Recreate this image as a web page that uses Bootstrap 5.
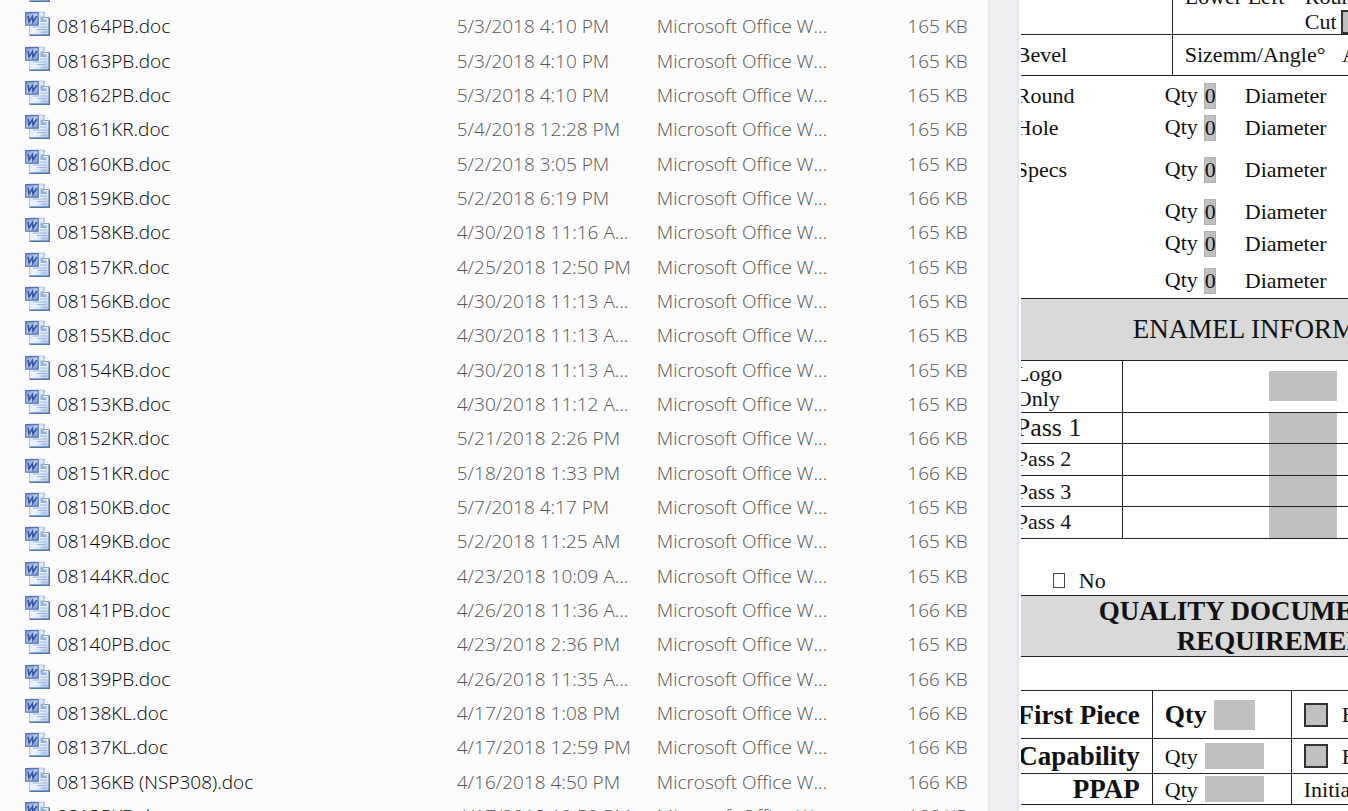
<!DOCTYPE html>
<html lang="en">
<head>
<meta charset="utf-8">
<meta name="viewport" content="width=device-width, initial-scale=1">
<title>Files and order form</title>
<link href="https://cdn.jsdelivr.net/npm/bootstrap@5.3.0/dist/css/bootstrap.min.css" rel="stylesheet">
<style>
  .workspace { display: grid; grid-template-columns: minmax(0, 3fr) 31px minmax(0, 1fr); }

  /* File list */
  .file-pane { background: #fcfcfc; }
  .file-list { table-layout: fixed; margin-top: -25px; font: 300 19px/24px "Open Sans", "Noto Sans", sans-serif; color: #555; }
  .file-list tr { height: 34px; }
  .file-list tr:nth-child(3n) { height: 35px; }
  .file-list td { padding: 0; white-space: nowrap; overflow: hidden; vertical-align: middle; }
  .file-list .file-name { padding-left: 25px; color: #000; }
  .file-list .file-name span { gap: 7px; }
  .file-list .file-size { padding-right: 20px; text-align: right; }
  .col-mid { width: 200px; }
  .col-size { width: 131px; }
  .doc-icon { width: 25px; height: 25px; margin-bottom: 5px; }
  .splitter { background: #eee; border-left: 2px solid #e8e8e8; border-right: 2px solid #dae5f5; }

  /* Order form */
  .form-pane { background: #fff; border-left: 2px solid #fff; font: 22px/25px "Liberation Serif", serif; color: #111; }
  .form-sheet { width: 640px; }
  .form-sheet table { width: 100%; table-layout: fixed; border-collapse: separate; border-spacing: 0; }
  .form-sheet th, .form-sheet td { padding: 0 12px; vertical-align: middle; font-weight: 400; white-space: nowrap; }
  .ruled th, .ruled td { border-bottom: 1px solid #222; }
  .ruled th, .ruled .divided { border-right: 1px solid #222; }
  .form-sheet .cut-off { padding-left: 0; text-indent: -5px; }
  .big { font-size: 27px; line-height: 30px; }
  .form-sheet .raised { padding-bottom: 2px; }
  .band { background: #d9d9d9; border-bottom: 1px solid #222; font-size: 27px; line-height: 30px; margin: 0; font-weight: 400; }
  .enamel { height: 62px; padding: 0 0 2px 112px; }
  .quality { padding-left: 78px; }
  .quality span { padding-left: 78px; }
  .corner-table { margin-top: -16px; }
  .corner-grid { display: grid; grid-template-columns: 120px 1fr; }
  .pass-table .pass-1 { font-size: 26px; line-height: 28px; }
  .pass-table td, .pass-table th { height: 31px; }
  .pass-table tr:nth-child(2n+3) td { height: 32px; }
  .fill { appearance: none; border: 0; border-radius: 0; background: #c0c0c0; padding: 0; margin: 0; display: block; color: #111; outline: 0; }
  .fill-zero { width: 12px; height: 26px; border: 1px solid #b0b0b0; text-align: center; font: inherit; }
  .fill-col { width: 68px; height: 30px; margin-left: 134px; }
  .pass-table tr:nth-child(2n+3) .fill-col { height: 31px; }
  .fill-wide { width: 59px; height: 26px; }
  .fill-narrow { width: 41px; height: 30px; }
  .tick { appearance: none; background: #c0c0c0; border: 2px solid #333; margin: 0; width: 24px; height: 24px; flex: none; }
  .tick-plain { appearance: none; background: #fff; border: 1px solid #444; margin: 0; width: 12px; height: 15px; }
  .hole-table { border-bottom: 1px solid #222; }
  .hole-table label { gap: 6px; line-height: 24px; }
  .none-row { padding: 28px 0 0 32px; border-bottom: 1px solid #222; height: 57px; }
  .none-row label { height: 26px; gap: 14px; }
  .quality-table { border-top: 1px solid #222; margin-top: 33px; }
  .qty { gap: 7px; }
  .qty-big { gap: 7px; font-size: 26px; }
  .check-label { gap: 14px; }
</style>
</head>
<body>
<svg class="position-absolute" width="0" height="0" aria-hidden="true">
  <defs>
    <linearGradient id="sheet" x1="0" y1="0" x2="1" y2="1"><stop offset="0" stop-color="#cfe0f6"/><stop offset=".55" stop-color="#edf4fd"/><stop offset="1" stop-color="#a3c3ec"/></linearGradient>
    <linearGradient id="plate" x1="0" y1="0" x2="1" y2="1"><stop offset="0" stop-color="#6f90d6"/><stop offset=".5" stop-color="#c3d4f1"/><stop offset="1" stop-color="#6d8ed2"/></linearGradient>
  </defs>
  <symbol id="word" viewBox="0 0 25 25">
    <path d="M4.500 1H19l5.300 5.500V24H4.500z" fill="url(#sheet)" stroke="#a8bddd" stroke-width=".8"/>
    <path d="M24.300 7v17.200H4.500" fill="none" stroke="#4f76ae" stroke-width="1.400"/>
    <path d="M19 1v5.500h5.300" fill="#fff" stroke="#7f96ba" stroke-width=".9"/>
    <path d="M15.500 5.500h3v3h3v2.500h-6z" fill="#8fb0e0"/>
    <path d="M15 13h6.500M8 16h13.500M12 18.500h9.500M16 21.200h5.500" stroke="#93afd8" stroke-width=".9"/>
    <path d="M.7 1.700h12.500v12.500H.7z" fill="url(#plate)" stroke="#5573b4" stroke-width="1.200"/>
    <path d="M3.200 5l.8 6L7.500 5.500 8 11l3.800-6" fill="none" stroke="#3353a0" stroke-width="1.600"/>
  </symbol>
</svg>

<div class="workspace vh-100 overflow-hidden">
  <main class="file-pane overflow-hidden">
    <table class="file-list w-100">
      <colgroup><col><col class="col-mid"><col class="col-mid"><col class="col-size"></colgroup>
      <tbody id="files"></tbody>
    </table>
  </main>

  <div class="splitter"></div>

  <aside class="form-pane overflow-hidden">
    <div class="form-sheet">
      <table class="ruled corner-table">
        <colgroup><col style="width:152px"><col></colgroup>
        <tr>
          <th class="cut-off"></th>
          <td>
            <div class="corner-grid">
              <span>Lower Left</span><span>Round</span>
              <span></span><label class="d-flex align-items-center gap-1">Cut <input class="tick" type="checkbox"></label>
            </div>
          </td>
        </tr>
        <tr style="height:41px"><th class="cut-off raised">Bevel</th><td class="raised">Sizemm/Angle°&nbsp; &nbsp;A</td></tr>
      </table>

      <table class="hole-table">
        <colgroup><col style="width:132px"><col style="width:80px"><col></colgroup>
        <tbody id="holes"></tbody>
      </table>

      <h2 class="band enamel d-flex align-items-center">ENAMEL INFORMATION</h2>

      <table class="ruled pass-table">
        <colgroup><col style="width:102px"><col></colgroup>
        <tr style="height:52px"><th class="cut-off align-top">Logo<br><span class="d-block">Only</span></th><td class="raised"><input class="fill fill-col" aria-label="Logo only"></td></tr>
        <tr><th class="cut-off pass-1">Pass 1</th><td><input class="fill fill-col" aria-label="Pass 1"></td></tr>
        <tr><th class="cut-off raised">Pass 2</th><td><input class="fill fill-col" aria-label="Pass 2"></td></tr>
        <tr><th class="cut-off">Pass 3</th><td><input class="fill fill-col" aria-label="Pass 3"></td></tr>
        <tr><th class="cut-off raised">Pass 4</th><td><input class="fill fill-col" aria-label="Pass 4"></td></tr>
      </table>

      <div class="none-row"><label class="d-flex align-items-center"><input class="tick-plain" type="checkbox">No</label></div>

      <h2 class="band quality"><strong>QUALITY DOCUMENTATION<br><span>REQUIREMENTS</span></strong></h2>

      <table class="ruled quality-table">
        <colgroup><col style="width:132px"><col style="width:139px"><col></colgroup>
        <tr style="height:48px">
          <th class="cut-off big text-end fw-bold">First Piece</th>
          <td class="divided"><label class="d-flex align-items-center fw-bold qty-big">Qty <input class="fill fill-narrow"></label></td>
          <td><label class="d-flex align-items-center check-label"><input class="tick" type="checkbox"> E</label></td>
        </tr>
        <tr style="height:35px">
          <th class="cut-off big text-end fw-bold">Capability</th>
          <td class="divided"><label class="d-flex align-items-center qty">Qty <input class="fill fill-wide"></label></td>
          <td><label class="d-flex align-items-center check-label"><input class="tick" type="checkbox"> E</label></td>
        </tr>
        <tr style="height:31px">
          <th class="cut-off big text-end fw-bold">PPAP</th>
          <td class="divided"><label class="d-flex align-items-center qty">Qty <input class="fill fill-wide"></label></td>
          <td>Initial</td>
        </tr>
      </table>
    </div>
  </aside>
</div>

<script src="https://cdn.jsdelivr.net/npm/bootstrap@5.3.0/dist/js/bootstrap.bundle.min.js"></script>
<script>
  const files = [
    ['08165PB', '5/3/2018 4:10 PM', 165], ['08164PB', '5/3/2018 4:10 PM', 165], ['08163PB', '5/3/2018 4:10 PM', 165],
    ['08162PB', '5/3/2018 4:10 PM', 165], ['08161KR', '5/4/2018 12:28 PM', 165], ['08160KB', '5/2/2018 3:05 PM', 165],
    ['08159KB', '5/2/2018 6:19 PM', 166], ['08158KB', '4/30/2018 11:16 A...', 165], ['08157KR', '4/25/2018 12:50 PM', 165],
    ['08156KB', '4/30/2018 11:13 A...', 165], ['08155KB', '4/30/2018 11:13 A...', 165], ['08154KB', '4/30/2018 11:13 A...', 165],
    ['08153KB', '4/30/2018 11:12 A...', 165], ['08152KR', '5/21/2018 2:26 PM', 166], ['08151KR', '5/18/2018 1:33 PM', 166],
    ['08150KB', '5/7/2018 4:17 PM', 165], ['08149KB', '5/2/2018 11:25 AM', 165], ['08144KR', '4/23/2018 10:09 A...', 165],
    ['08141PB', '4/26/2018 11:36 A...', 166], ['08140PB', '4/23/2018 2:36 PM', 165], ['08139PB', '4/26/2018 11:35 A...', 166],
    ['08138KL', '4/17/2018 1:08 PM', 166], ['08137KL', '4/17/2018 12:59 PM', 166], ['08136KB (NSP308)', '4/16/2018 4:50 PM', 166],
    ['08135KB', '4/17/2018 12:50 PM', 166]
  ];
  document.getElementById('files').innerHTML = files.map(([name, date, size]) => `
    <tr>
      <td class="file-name"><span class="d-flex align-items-center"><svg class="doc-icon" aria-hidden="true"><use href="#word"/></svg>${name}.doc</span></td>
      <td>${date}</td><td>Microsoft Office W...</td><td class="file-size">${size} KB</td>
    </tr>`).join('');

  const holes = [['Round', 36, 4], ['Hole', 32, 0], ['Specs', 52, 0], ['', 32, 0], ['', 32, 0], ['', 38, 4]];
  document.getElementById('holes').innerHTML = holes.map(([label, height, top]) => `
    <tr style="height:${height}px">
      <th class="cut-off raised" style="padding-top:${top}px">${label}</th>
      <td style="padding-top:${top}px"><label class="d-flex align-items-start">Qty <input class="fill fill-zero" value="0"></label></td>
      <td class="raised" style="padding-top:${top}px">Diameter</td>
    </tr>`).join('');
</script>
</body>
</html>
